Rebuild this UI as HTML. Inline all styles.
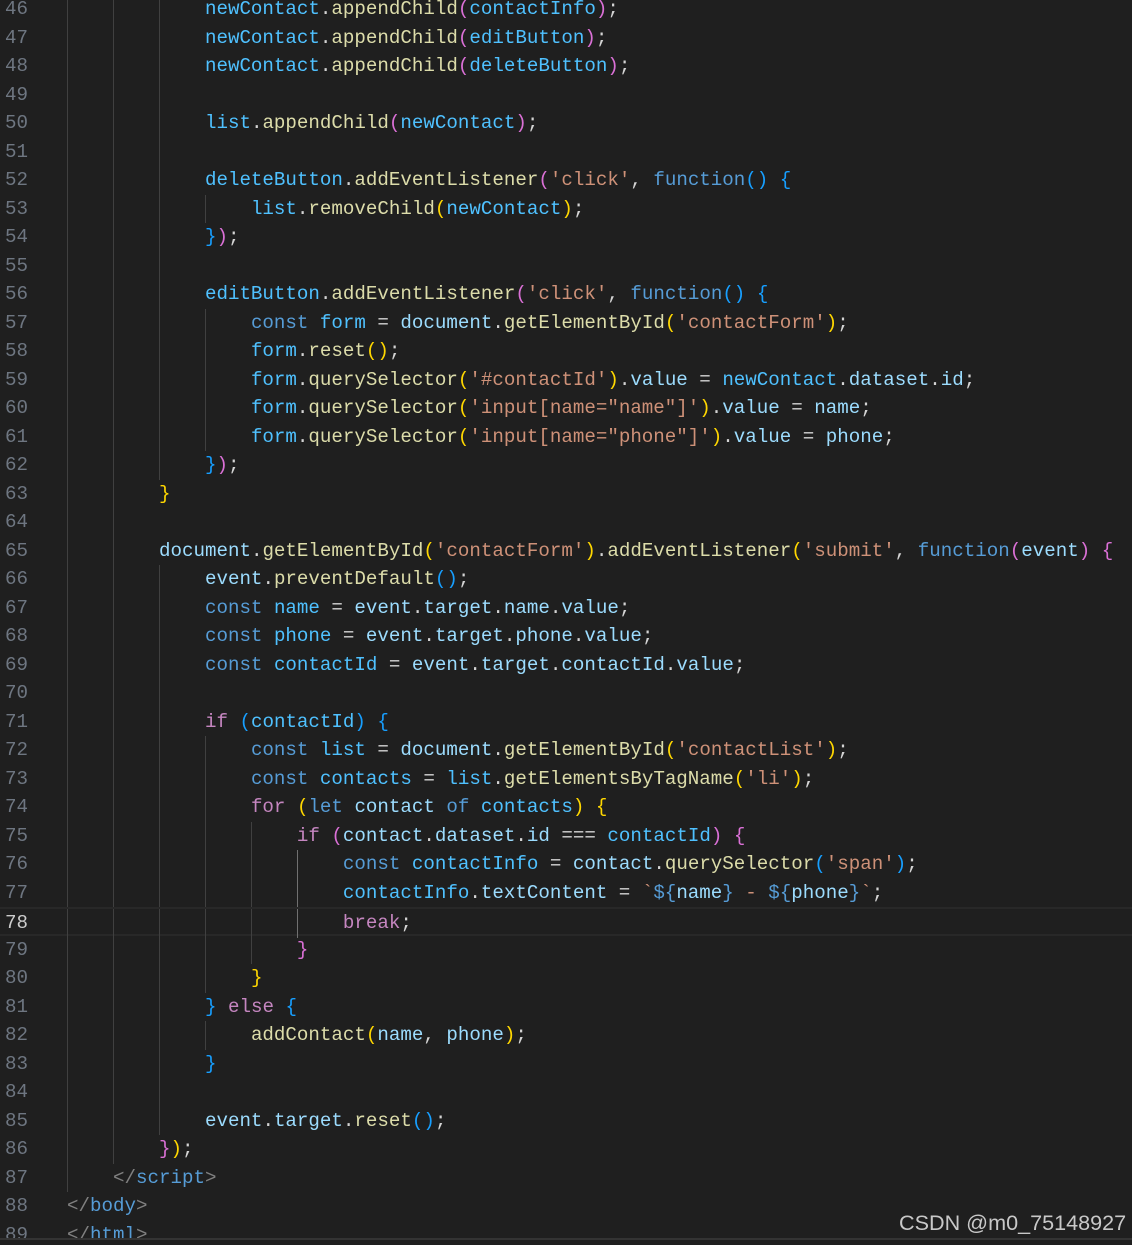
<!DOCTYPE html>
<html><head><meta charset="utf-8"><style>
html,body{margin:0;padding:0;background:#1f1f1f;width:1132px;height:1245px;overflow:hidden;position:relative}
#code{position:absolute;left:0;top:-5px;width:1132px;font-family:"Liberation Mono",monospace;font-size:19.17px;line-height:28.5px;color:#d4d4d4}
.l{position:relative;height:28.5px;white-space:pre}
.n{position:absolute;left:0;width:28px;text-align:right;color:#6e7681}
.t{position:absolute;left:67px}
.g{position:absolute;top:0;width:1px;height:28.5px;background:#404040}
.ga{background:#707070}
.cur{border-top:2px solid #282828;border-bottom:2px solid #282828;box-sizing:border-box}
.cur .n{color:#cccccc}
.v{color:#9cdcfe}.c4{color:#4fc1ff}.f{color:#dcdcaa}.s{color:#ce9178}.k{color:#569cd6}.c{color:#c586c0}
.b1{color:#ffd700}.b2{color:#da70d6}.b3{color:#179fff}.gr{color:#808080}
#wm{position:absolute;left:899px;top:1210px;font-family:"Liberation Sans",sans-serif;font-size:21.6px;color:#c8c8c8}
#bl{position:absolute;left:0;top:1238px;width:1132px;height:2px;background:#333}
</style></head><body>
<div id="code">
<div class="l"><span class="n">46</span><span class="t">            <span class="c4">newContact</span>.<span class="f">appendChild</span><span class="b2">(</span><span class="c4">contactInfo</span><span class="b2">)</span>;</span></div>
<div class="l"><span class="n">47</span><span class="t">            <span class="c4">newContact</span>.<span class="f">appendChild</span><span class="b2">(</span><span class="c4">editButton</span><span class="b2">)</span>;</span></div>
<div class="l"><span class="n">48</span><span class="t">            <span class="c4">newContact</span>.<span class="f">appendChild</span><span class="b2">(</span><span class="c4">deleteButton</span><span class="b2">)</span>;</span></div>
<div class="l"><span class="n">49</span><span class="t"></span></div>
<div class="l"><span class="n">50</span><span class="t">            <span class="c4">list</span>.<span class="f">appendChild</span><span class="b2">(</span><span class="c4">newContact</span><span class="b2">)</span>;</span></div>
<div class="l"><span class="n">51</span><span class="t"></span></div>
<div class="l"><span class="n">52</span><span class="t">            <span class="c4">deleteButton</span>.<span class="f">addEventListener</span><span class="b2">(</span><span class="s">'click'</span>, <span class="k">function</span><span class="b3">()</span> <span class="b3">{</span></span></div>
<div class="l"><span class="n">53</span><span class="t">                <span class="c4">list</span>.<span class="f">removeChild</span><span class="b1">(</span><span class="c4">newContact</span><span class="b1">)</span>;</span></div>
<div class="l"><span class="n">54</span><span class="t">            <span class="b3">}</span><span class="b2">)</span>;</span></div>
<div class="l"><span class="n">55</span><span class="t"></span></div>
<div class="l"><span class="n">56</span><span class="t">            <span class="c4">editButton</span>.<span class="f">addEventListener</span><span class="b2">(</span><span class="s">'click'</span>, <span class="k">function</span><span class="b3">()</span> <span class="b3">{</span></span></div>
<div class="l"><span class="n">57</span><span class="t">                <span class="k">const</span> <span class="c4">form</span> = <span class="v">document</span>.<span class="f">getElementById</span><span class="b1">(</span><span class="s">'contactForm'</span><span class="b1">)</span>;</span></div>
<div class="l"><span class="n">58</span><span class="t">                <span class="c4">form</span>.<span class="f">reset</span><span class="b1">()</span>;</span></div>
<div class="l"><span class="n">59</span><span class="t">                <span class="c4">form</span>.<span class="f">querySelector</span><span class="b1">(</span><span class="s">'#contactId'</span><span class="b1">)</span>.<span class="v">value</span> = <span class="c4">newContact</span>.<span class="v">dataset</span>.<span class="v">id</span>;</span></div>
<div class="l"><span class="n">60</span><span class="t">                <span class="c4">form</span>.<span class="f">querySelector</span><span class="b1">(</span><span class="s">'input[name="name"]'</span><span class="b1">)</span>.<span class="v">value</span> = <span class="v">name</span>;</span></div>
<div class="l"><span class="n">61</span><span class="t">                <span class="c4">form</span>.<span class="f">querySelector</span><span class="b1">(</span><span class="s">'input[name="phone"]'</span><span class="b1">)</span>.<span class="v">value</span> = <span class="v">phone</span>;</span></div>
<div class="l"><span class="n">62</span><span class="t">            <span class="b3">}</span><span class="b2">)</span>;</span></div>
<div class="l"><span class="n">63</span><span class="t">        <span class="b1">}</span></span></div>
<div class="l"><span class="n">64</span><span class="t"></span></div>
<div class="l"><span class="n">65</span><span class="t">        <span class="v">document</span>.<span class="f">getElementById</span><span class="b1">(</span><span class="s">'contactForm'</span><span class="b1">)</span>.<span class="f">addEventListener</span><span class="b1">(</span><span class="s">'submit'</span>, <span class="k">function</span><span class="b2">(</span><span class="v">event</span><span class="b2">)</span> <span class="b2">{</span></span></div>
<div class="l"><span class="n">66</span><span class="t">            <span class="v">event</span>.<span class="f">preventDefault</span><span class="b3">()</span>;</span></div>
<div class="l"><span class="n">67</span><span class="t">            <span class="k">const</span> <span class="c4">name</span> = <span class="v">event</span>.<span class="v">target</span>.<span class="v">name</span>.<span class="v">value</span>;</span></div>
<div class="l"><span class="n">68</span><span class="t">            <span class="k">const</span> <span class="c4">phone</span> = <span class="v">event</span>.<span class="v">target</span>.<span class="v">phone</span>.<span class="v">value</span>;</span></div>
<div class="l"><span class="n">69</span><span class="t">            <span class="k">const</span> <span class="c4">contactId</span> = <span class="v">event</span>.<span class="v">target</span>.<span class="v">contactId</span>.<span class="v">value</span>;</span></div>
<div class="l"><span class="n">70</span><span class="t"></span></div>
<div class="l"><span class="n">71</span><span class="t">            <span class="c">if</span> <span class="b3">(</span><span class="c4">contactId</span><span class="b3">)</span> <span class="b3">{</span></span></div>
<div class="l"><span class="n">72</span><span class="t">                <span class="k">const</span> <span class="c4">list</span> = <span class="v">document</span>.<span class="f">getElementById</span><span class="b1">(</span><span class="s">'contactList'</span><span class="b1">)</span>;</span></div>
<div class="l"><span class="n">73</span><span class="t">                <span class="k">const</span> <span class="c4">contacts</span> = <span class="c4">list</span>.<span class="f">getElementsByTagName</span><span class="b1">(</span><span class="s">'li'</span><span class="b1">)</span>;</span></div>
<div class="l"><span class="n">74</span><span class="t">                <span class="c">for</span> <span class="b1">(</span><span class="k">let</span> <span class="v">contact</span> <span class="k">of</span> <span class="c4">contacts</span><span class="b1">)</span> <span class="b1">{</span></span></div>
<div class="l"><span class="n">75</span><span class="t">                    <span class="c">if</span> <span class="b2">(</span><span class="v">contact</span>.<span class="v">dataset</span>.<span class="v">id</span> === <span class="c4">contactId</span><span class="b2">)</span> <span class="b2">{</span></span></div>
<div class="l"><span class="n">76</span><span class="t">                        <span class="k">const</span> <span class="c4">contactInfo</span> = <span class="v">contact</span>.<span class="f">querySelector</span><span class="b3">(</span><span class="s">'span'</span><span class="b3">)</span>;</span></div>
<div class="l"><span class="n">77</span><span class="t">                        <span class="c4">contactInfo</span>.<span class="v">textContent</span> = <span class="s">`</span><span class="k">${</span><span class="v">name</span><span class="k">}</span><span class="s"> - </span><span class="k">${</span><span class="v">phone</span><span class="k">}</span><span class="s">`</span>;</span></div>
<div class="l cur"><span class="n">78</span><span class="t">                        <span class="c">break</span>;</span></div>
<div class="l"><span class="n">79</span><span class="t">                    <span class="b2">}</span></span></div>
<div class="l"><span class="n">80</span><span class="t">                <span class="b1">}</span></span></div>
<div class="l"><span class="n">81</span><span class="t">            <span class="b3">}</span> <span class="c">else</span> <span class="b3">{</span></span></div>
<div class="l"><span class="n">82</span><span class="t">                <span class="f">addContact</span><span class="b1">(</span><span class="v">name</span>, <span class="v">phone</span><span class="b1">)</span>;</span></div>
<div class="l"><span class="n">83</span><span class="t">            <span class="b3">}</span></span></div>
<div class="l"><span class="n">84</span><span class="t"></span></div>
<div class="l"><span class="n">85</span><span class="t">            <span class="v">event</span>.<span class="v">target</span>.<span class="f">reset</span><span class="b3">()</span>;</span></div>
<div class="l"><span class="n">86</span><span class="t">        <span class="b2">}</span><span class="b1">)</span>;</span></div>
<div class="l"><span class="n">87</span><span class="t">    <span class="gr">&lt;/</span><span class="k">script</span><span class="gr">&gt;</span></span></div>
<div class="l"><span class="n">88</span><span class="t"><span class="gr">&lt;/</span><span class="k">body</span><span class="gr">&gt;</span></span></div>
<div class="l"><span class="n">89</span><span class="t"><span class="gr">&lt;/</span><span class="k">html</span><span class="gr">&gt;</span></span></div>
</div>
<div id="bl"></div>
<div id="wm">CSDN @m0_75148927</div>
<script>
var L=document.querySelectorAll('#code .l'),ind=[];
L.forEach(function(l){var t=l.querySelector('.t').textContent;ind.push(t.length?t.match(/^ */)[0].length:-1);});
for(var i=0;i<ind.length;i++){if(ind[i]<0){var a=-1,b=-1;for(var j=i-1;j>=0;j--)if(ind[j]>=0){a=ind[j];break;}for(var j=i+1;j<ind.length;j++)if(ind[j]>=0){b=ind[j];break;}ind[i]=Math.max(a,b);}}
L.forEach(function(l,i){for(var c=0;c<ind[i];c+=4){var g=document.createElement('div');g.className='g';var n=46+i;if(c==20&&n>=76&&n<=78)g.className+=' ga';g.style.left=(67+c*11.5)+'px';l.appendChild(g);}});
</script>
</body></html>
